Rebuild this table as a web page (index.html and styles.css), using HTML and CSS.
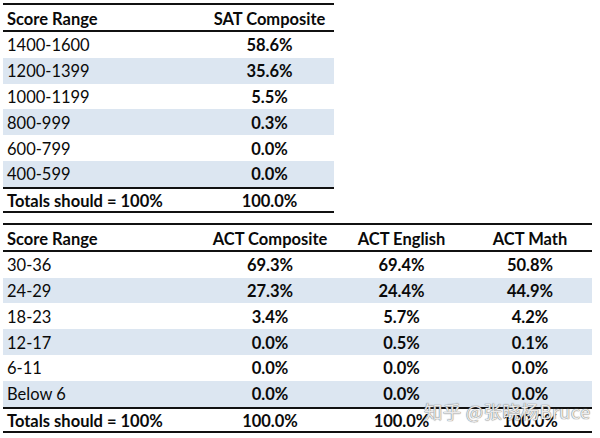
FILE: index.html
```html
<!DOCTYPE html>
<html>
<head>
<meta charset="utf-8">
<link rel="stylesheet" href="styles.css">
</head>
<body>
<div class="page">
  <table class="tbl sat">
    <colgroup><col class="c1"><col class="c2"></colgroup>
    <thead>
      <tr class="head"><th class="lbl">Score Range</th><th>SAT Composite</th></tr>
    </thead>
    <tbody>
      <tr><td class="lbl">1400-1600</td><td class="val">58.6%</td></tr>
      <tr class="alt"><td class="lbl">1200-1399</td><td class="val">35.6%</td></tr>
      <tr><td class="lbl">1000-1199</td><td class="val">5.5%</td></tr>
      <tr class="alt"><td class="lbl">800-999</td><td class="val">0.3%</td></tr>
      <tr><td class="lbl">600-799</td><td class="val">0.0%</td></tr>
      <tr class="alt"><td class="lbl">400-599</td><td class="val">0.0%</td></tr>
      <tr class="total"><td class="lbl">Totals should = 100%</td><td class="val">100.0%</td></tr>
    </tbody>
  </table>

  <table class="tbl act">
    <colgroup><col class="c1"><col class="c2"><col class="c3"><col class="c4"></colgroup>
    <thead>
      <tr class="head"><th class="lbl">Score Range</th><th>ACT Composite</th><th>ACT English</th><th>ACT Math</th></tr>
    </thead>
    <tbody>
      <tr><td class="lbl">30-36</td><td class="val">69.3%</td><td class="val">69.4%</td><td class="val">50.8%</td></tr>
      <tr class="alt"><td class="lbl">24-29</td><td class="val">27.3%</td><td class="val">24.4%</td><td class="val">44.9%</td></tr>
      <tr><td class="lbl">18-23</td><td class="val">3.4%</td><td class="val">5.7%</td><td class="val">4.2%</td></tr>
      <tr class="alt"><td class="lbl">12-17</td><td class="val">0.0%</td><td class="val">0.5%</td><td class="val">0.1%</td></tr>
      <tr><td class="lbl">6-11</td><td class="val">0.0%</td><td class="val">0.0%</td><td class="val">0.0%</td></tr>
      <tr class="alt"><td class="lbl">Below 6</td><td class="val">0.0%</td><td class="val">0.0%</td><td class="val">0.0%</td></tr>
      <tr class="total"><td class="lbl">Totals should = 100%</td><td class="val">100.0%</td><td class="val">100.0%</td><td class="val">100.0%</td></tr>
    </tbody>
  </table>

  <div class="watermark">知乎 @张晓杨Bruce</div>
</div>
</body>
</html>
```

FILE: styles.css
```css
html, body {
  margin: 0;
  padding: 0;
  background: #ffffff;
}

.page {
  position: relative;
  width: 600px;
  height: 438px;
  padding: 3px 0 0 3px;
  box-sizing: border-box;
  font-family: Lato, "Open Sans", sans-serif;
  font-size: 16.5px;
  color: #0a0a0a;
  display: flex;
  flex-direction: column;
  gap: 10px;
}

.tbl {
  border-collapse: collapse;
  table-layout: fixed;
  border-top: 2px solid #111;
  border-bottom: 2px solid #111;
}

.sat { width: 331px; }
.act { width: 589px; }

.c1 { width: 202px; }
.sat .c2 { width: 129px; }
.act .c2 { width: 130px; }
.act .c3 { width: 133px; }
.act .c4 { width: 124px; }

.tbl th,
.tbl td {
  padding: 1px 0 0 0;
  height: 24.8px;
  line-height: 20px;
  text-align: center;
  white-space: nowrap;
  vertical-align: middle;
}

.tbl th {
  font-weight: 700;
  height: 22px;
  padding-top: 3px;
}

.tbl .lbl {
  text-align: left;
  padding-left: 4px;
}

.head { border-bottom: 2px solid #111; }

.val { font-weight: 700; }

.alt td { background: #dce6f1; }

.total { border-top: 2px solid #111; }
.total td { height: 20px; padding-top: 2px; }
.total .lbl { font-weight: 700; }

.watermark {
  position: absolute;
  left: 424px;
  top: 400px;
  white-space: nowrap;
  font-family: "Noto Sans CJK SC", "Noto Sans", sans-serif;
  font-size: 18.5px;
  line-height: 22px;
  color: rgba(255, 255, 255, 0.85);
  text-shadow: 0 0 1px #777, 0 0 1px #777;
  letter-spacing: 0.2px;
}
```
